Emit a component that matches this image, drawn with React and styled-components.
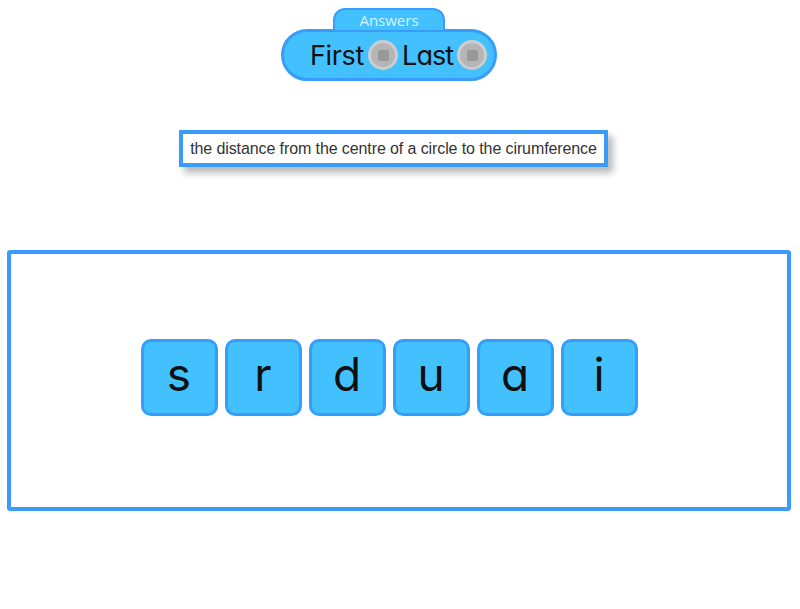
import * as React from "react";
import styled, { createGlobalStyle } from "styled-components";

const GlobalStyle = createGlobalStyle`
  html, body {
    margin: 0;
    padding: 0;
    background: #ffffff;
  }
  body {
    font-family: "Liberation Sans", Arial, sans-serif;
  }
`;

const Page = styled.div`
  width: 800px;
  height: 609px;
  display: flex;
  flex-direction: column;
  align-items: center;
  overflow: hidden;
`;

const Toggle = styled.div`
  display: flex;
  flex-direction: column;
  align-items: center;
  margin-top: 8px;
  margin-right: 22px;
`;

const Tab = styled.div`
  width: 112px;
  height: 22px;
  box-sizing: border-box;
  background: #42c1fe;
  border: 2px solid #3a9cf9;
  border-bottom: none;
  border-radius: 12px 12px 0 0;
  color: #d9f1ff;
  font-family: "Open Sans", "Noto Sans", sans-serif;
  font-size: 15px;
  line-height: 20px;
  text-align: center;
  margin-bottom: -1px;
  position: relative;
  z-index: 1;
`;

const Pill = styled.div`
  width: 216px;
  height: 52px;
  box-sizing: border-box;
  background: #42c1fe;
  border: 3px solid #3a9cf9;
  border-radius: 26px;
  display: flex;
  align-items: center;
  justify-content: flex-end;
  gap: 4px;
  padding-right: 7px;
`;

const Label = styled.span`
  font-family: "Inter", "Open Sans", sans-serif;
  font-feature-settings: "cv11";
  font-size: 27px;
  color: #111111;
  letter-spacing: ${(p) => p.$spacing || "-0.3px"};
`;

const Switch = styled.span`
  width: 30px;
  height: 30px;
  box-sizing: border-box;
  border-radius: 50%;
  background: #b5b5b5;
  border: 3px solid #cdcdcd;
  display: flex;
  align-items: center;
  justify-content: center;
  &::after {
    content: "";
    width: 11px;
    height: 11px;
    border-radius: 2px;
    background: #999999;
  }
`;

const Clue = styled.div`
  margin-top: 49px;
  margin-right: 13px;
  box-sizing: border-box;
  border: 4px solid #3a9cf9;
  background: #ffffff;
  padding: 0 7px;
  height: 37px;
  display: flex;
  align-items: center;
  font-size: 16px;
  letter-spacing: -0.1px;
  color: #333333;
  white-space: nowrap;
  box-shadow: 5px 6px 7px rgba(0, 0, 0, 0.28);
`;

const Board = styled.div`
  margin-top: 83px;
  align-self: flex-start;
  margin-left: 7px;
  width: 784px;
  height: 261px;
  box-sizing: border-box;
  border: 4px solid #3a9cf9;
  border-radius: 3px;
  display: flex;
  align-items: center;
  justify-content: center;
  padding-right: 20px;
`;

const Tiles = styled.div`
  display: flex;
  gap: 7px;
  margin-top: -6px;
`;

const Tile = styled.div`
  width: 77px;
  height: 77px;
  box-sizing: border-box;
  background: #42c1fe;
  border: 3px solid #3a9cf9;
  border-radius: 10px;
  display: flex;
  align-items: center;
  justify-content: center;
  font-family: "Inter", "Open Sans", sans-serif;
  font-feature-settings: "cv11";
  font-size: 46px;
  color: #111111;
  line-height: 1;
  padding-bottom: 8px;
`;

const letters = ["s", "r", "d", "u", "a", "i"];

const App = () => {
  return (
    <Page>
      <GlobalStyle />
      <Toggle>
        <Tab>Answers</Tab>
        <Pill>
          <Label>First</Label>
          <Switch />
          <Label $spacing="-1px">Last</Label>
          <Switch />
        </Pill>
      </Toggle>
      <Clue>the distance from the centre of a circle to the cirumference</Clue>
      <Board>
        <Tiles>
          {letters.map((l, i) => (
            <Tile key={i}>{l}</Tile>
          ))}
        </Tiles>
      </Board>
    </Page>
  );
};

export default App;
